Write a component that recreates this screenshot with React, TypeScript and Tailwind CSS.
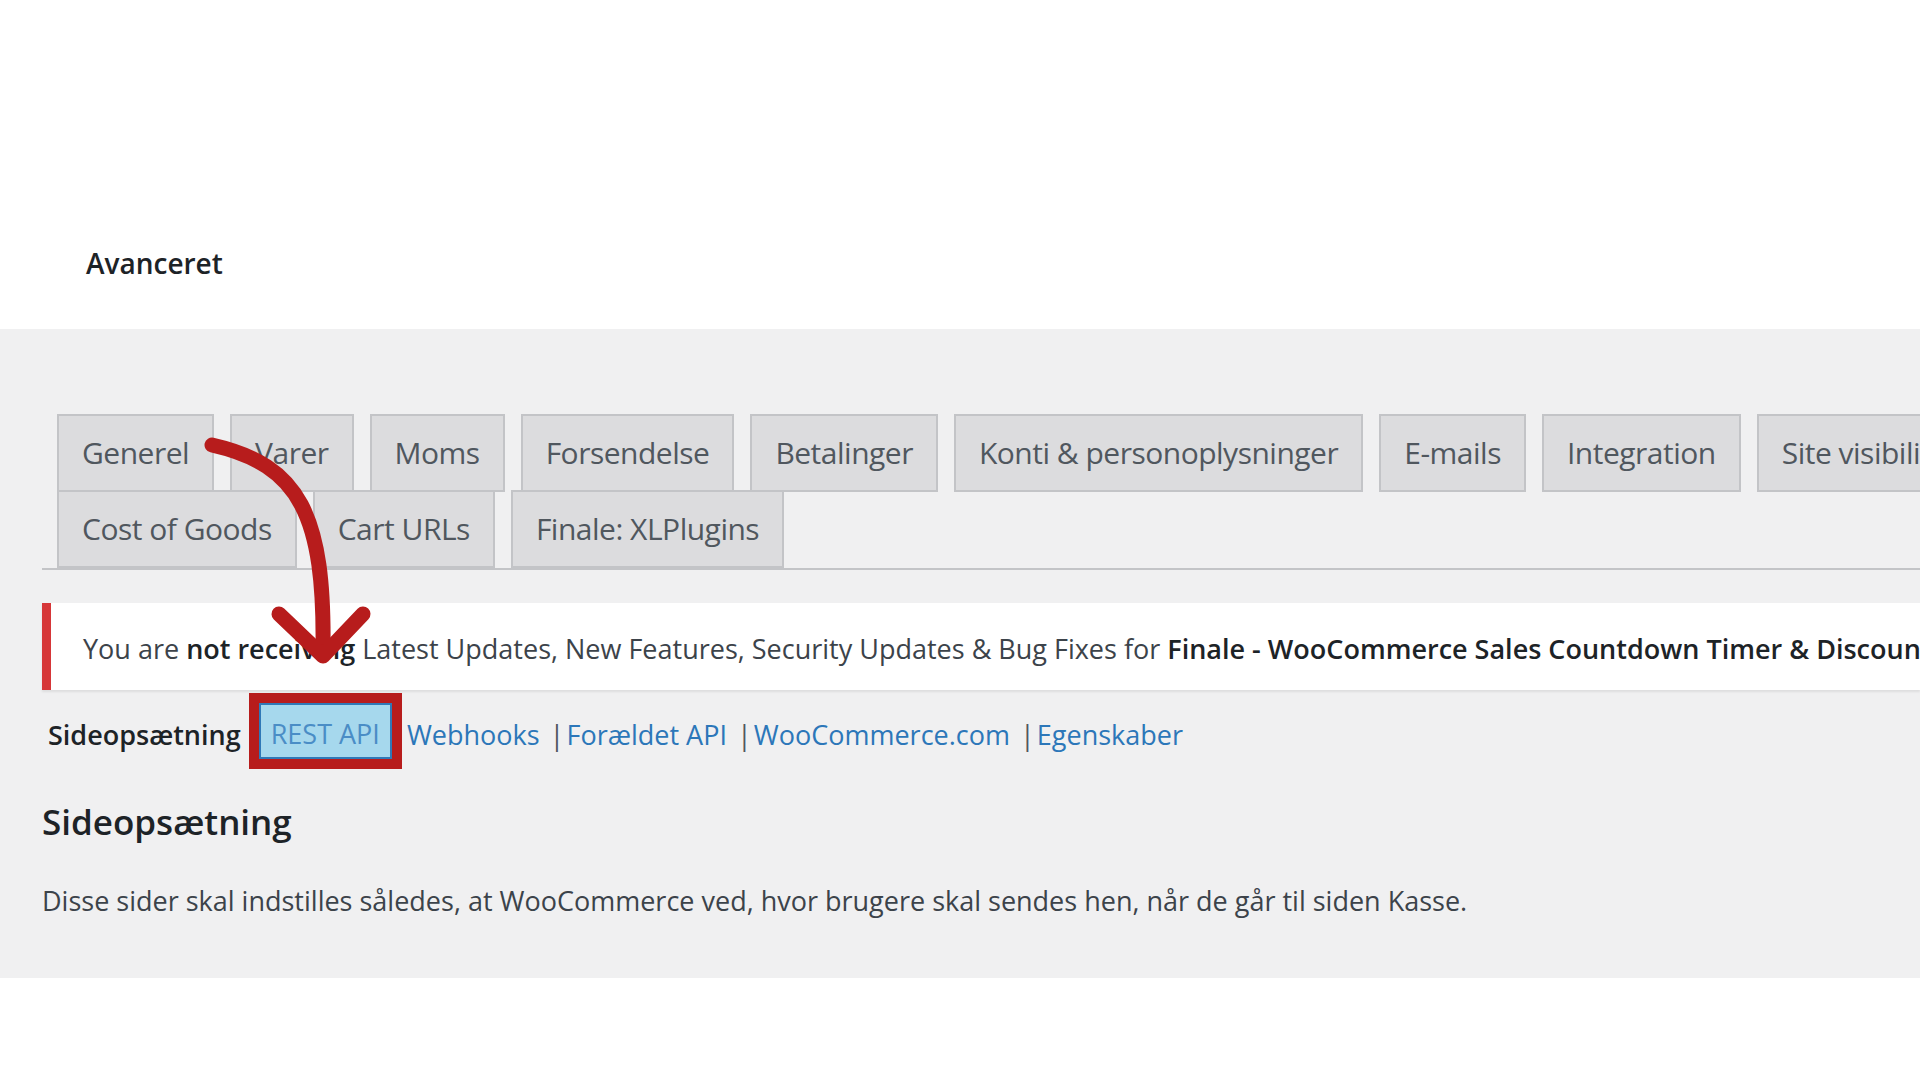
import React from "react";

const FONT = "font-['Open_Sans','Noto_Sans',Arial,sans-serif]";

function Tab({ label }: { label: string }) {
  return (
    <div className="shrink-0 whitespace-nowrap border-2 border-[#c3c4c7] bg-[#dcdcde] px-[23px] py-[10px] text-[30px] leading-[54px] text-[#50575e] tracking-[-0.5px]">
      {label}
    </div>
  );
}

function Sep() {
  return <span className="pt-[8px] text-[#50575e] ml-[10px] mr-[2px]">|</span>;
}

export default function App() {
  const row1 = [
    "Generel",
    "Varer",
    "Moms",
    "Forsendelse",
    "Betalinger",
    "Konti & personoplysninger",
    "E-mails",
    "Integration",
    "Site visibility",
  ];
  const row2 = ["Cost of Goods", "Cart URLs", "Finale: XLPlugins"];
  return (
    <div className={`relative w-[1920px] h-[1080px] overflow-hidden bg-white ${FONT}`}>
      <header className="h-[329px] pl-[86px] pt-[243px]">
        <div className="text-[28px] leading-[40px] font-semibold text-[#1d2327]">Avanceret</div>
      </header>
      <main className="h-[649px] bg-[#f0f0f1] pl-[42px] pt-[85px]">
        <div className="border-b-2 border-[#c3c4c7] pl-[15px]">
          <div className="flex flex-nowrap gap-[16px]">
            {row1.map((t) => (
              <Tab key={t} label={t} />
            ))}
          </div>
          <div className="flex flex-nowrap gap-[16px] -mt-[2px]">
            {row2.map((t) => (
              <Tab key={t} label={t} />
            ))}
          </div>
        </div>

        <div className="mt-[33px] border-l-[9px] border-[#d63638] bg-white pl-[32px] pt-[24px] pb-[20px] shadow-[0_2px_2px_rgba(0,0,0,0.08)] whitespace-nowrap overflow-hidden text-[27px] leading-[43px] text-[#3c434a]">
          You are <span className="font-semibold text-[#1d2327]">not receiving</span> Latest Updates, New Features, Security Updates &amp; Bug Fixes for{" "}
          <span className="font-semibold text-[#1d2327]">Finale - WooCommerce Sales Countdown Timer &amp; Discount Plugin</span>.
        </div>

        <div className="mt-[3px] flex items-center h-[76px] pl-[6px] whitespace-nowrap text-[27px] leading-[40px]">
          <span className="pt-[8px] font-semibold text-[#1d2327]">Sideopsætning</span>
          <span className="ml-[8px] border-[10px] border-[#b71c1c]">
            <span className="flex h-[56px] items-center border-2 border-[#2f78b7] bg-[#a6d8ed] px-[10px] pt-[6px] text-[#4a8dc6]">
              REST API
            </span>
          </span>
          <a className="pt-[8px] ml-[5px] text-[#2c77b9]">Webhooks</a>
          <Sep />
          <a className="pt-[8px] text-[#2c77b9]">Forældet API</a>
          <Sep />
          <a className="pt-[8px] text-[#2c77b9]">WooCommerce.com</a>
          <Sep />
          <a className="pt-[8px] text-[#2c77b9]">Egenskaber</a>
        </div>

        <h2 className="mt-[29px] text-[35px] leading-[48px] font-semibold text-[#1d2327]">Sideopsætning</h2>
        <p className="mt-[35px] text-[27px] leading-[40px] text-[#3c434a]">
          Disse sider skal indstilles således, at WooCommerce ved, hvor brugere skal sendes hen, når de går til siden Kasse.
        </p>
      </main>

      <svg
        className="pointer-events-none absolute left-0 top-0"
        width="1920"
        height="1080"
        viewBox="0 0 1920 1080"
        fill="none"
      >
        <path
          d="M212 445 C300 465 325 515 323 652"
          stroke="#b71c1c"
          strokeWidth="15"
          strokeLinecap="round"
        />
        <path
          d="M279 614 L323 656 L363 614"
          stroke="#b71c1c"
          strokeWidth="15"
          strokeLinecap="round"
          strokeLinejoin="round"
        />
      </svg>
    </div>
  );
}
